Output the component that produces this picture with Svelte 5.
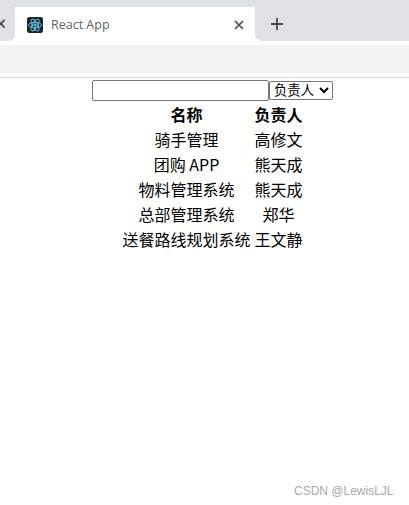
<script>
  const rows = [
    { name: "骑手管理", owner: "高修文" },
    { name: "团购 APP", owner: "熊天成" },
    { name: "物料管理系统", owner: "熊天成" },
    { name: "总部管理系统", owner: "郑华" },
    { name: "送餐路线规划系统", owner: "王文静" },
  ];
</script>

<div class="chrome">
  <div class="tabstrip">
    <div class="prev-tab">
      <svg width="9" height="10" viewBox="0 0 9 10"><path d="M-3 0.8L4.6 8.6M4.6 0.8L-3 8.6" stroke="#45484c" stroke-width="1.7" fill="none" /></svg>
    </div>
    <div class="tab">
      <svg class="favicon" width="16" height="16" viewBox="0 0 16 16">
        <rect width="16" height="16" rx="2.5" fill="#20232a" />
        <g fill="none" stroke="#5fc9e6" stroke-width="0.9">
          <ellipse cx="8" cy="8" rx="6.6" ry="2.6" />
          <ellipse cx="8" cy="8" rx="6.6" ry="2.6" transform="rotate(60 8 8)" />
          <ellipse cx="8" cy="8" rx="6.6" ry="2.6" transform="rotate(120 8 8)" />
        </g>
        <circle cx="8" cy="8" r="1.4" fill="#5fc9e6" />
      </svg>
      <span class="title">React App</span>
      <svg class="close" width="10" height="10" viewBox="0 0 10 10"><path d="M1 1L9 9M9 1L1 9" stroke="#4a4d51" stroke-width="1.7" fill="none" /></svg>
    </div>
    <div class="rest">
      <svg class="plus" width="14" height="14" viewBox="0 0 14 14"><path d="M7 1V13M1 7H13" stroke="#45484c" stroke-width="1.8" fill="none" /></svg>
    </div>
  </div>
  <div class="toolbar"></div>
</div>

<main class="page">
  <div class="search">
    <input type="text" />
    <select>
      <option>负责人</option>
      <option>名称</option>
    </select>
  </div>
  <table>
    <thead>
      <tr>
        <th>名称</th>
        <th>负责人</th>
      </tr>
    </thead>
    <tbody>
      {#each rows as row}
        <tr>
          <td>{row.name}</td>
          <td>{row.owner}</td>
        </tr>
      {/each}
    </tbody>
  </table>
</main>

<div class="watermark">CSDN @LewisLJL</div>

<style>
  :global(body) {
    overflow: hidden;
    background: #fff;
    font-family: "Open Sans", "Noto Sans CJK SC", sans-serif;
  }

  .chrome {
    height: 77px;
    background: #fff;
    border-bottom: 1px solid #dcdcdc;
  }
  .tabstrip {
    display: flex;
    align-items: flex-start;
    height: 45px;
    background: linear-gradient(#dee1e6 7px, #fff 7px);
    padding-top: 7px;
    box-sizing: border-box;
  }
  .prev-tab {
    width: 15px;
    height: 34px;
    background: #dee1e6;
    border-bottom-right-radius: 7px;
    display: flex;
    align-items: center;
  }
  .tab {
    width: 240px;
    height: 38px;
    background: #fff;
    border-radius: 8px 8px 0 0;
    display: flex;
    align-items: center;
    padding: 0 12px 3px;
    box-sizing: border-box;
  }
  .favicon {
    flex: none;
  }
  .title {
    flex: 1;
    margin-left: 8px;
    font-size: 12.5px;
    color: #5f6368;
  }
  .close {
    flex: none;
    margin-right: -1px;
  }
  .rest {
    flex: 1;
    height: 34px;
    background: #dee1e6;
    border-bottom-left-radius: 7px;
    padding: 10px 0 0 15px;
    box-sizing: border-box;
  }
  .plus {
    display: block;
  }
  .toolbar {
    height: 28px;
    background: #f1f3f4;
  }

  .page {
    padding-left: 16px;
    padding-top: 2px;
    text-align: center;
    color: #000;
    font-family: "Noto Sans CJK SC", sans-serif;
  }
  .search {
    display: flex;
    justify-content: center;
    align-items: center;
    height: 21px;
  }
  input {
    width: 177px;
    height: 21px;
    box-sizing: border-box;
    margin: 0;
    border: 1px solid #767676;
    border-radius: 2px;
    background: #fff;
  }
  select {
    width: 64px;
    height: 19px;
    box-sizing: border-box;
    margin: 0;
    font-size: 13.33px;
    font-family: "Liberation Sans", "Noto Sans CJK SC", sans-serif;
    border: 1px solid #767676;
    border-radius: 2px;
    background: #fff;
    padding: 0;
  }
  table {
    margin: 0 auto;
    font-size: 16px;
    line-height: 21px;
  }
  .watermark {
    position: absolute;
    left: 294px;
    top: 484px;
    font-family: "Liberation Sans", sans-serif;
    font-size: 12px;
    line-height: 14px;
    color: #a8a8a8;
    white-space: nowrap;
  }
</style>
